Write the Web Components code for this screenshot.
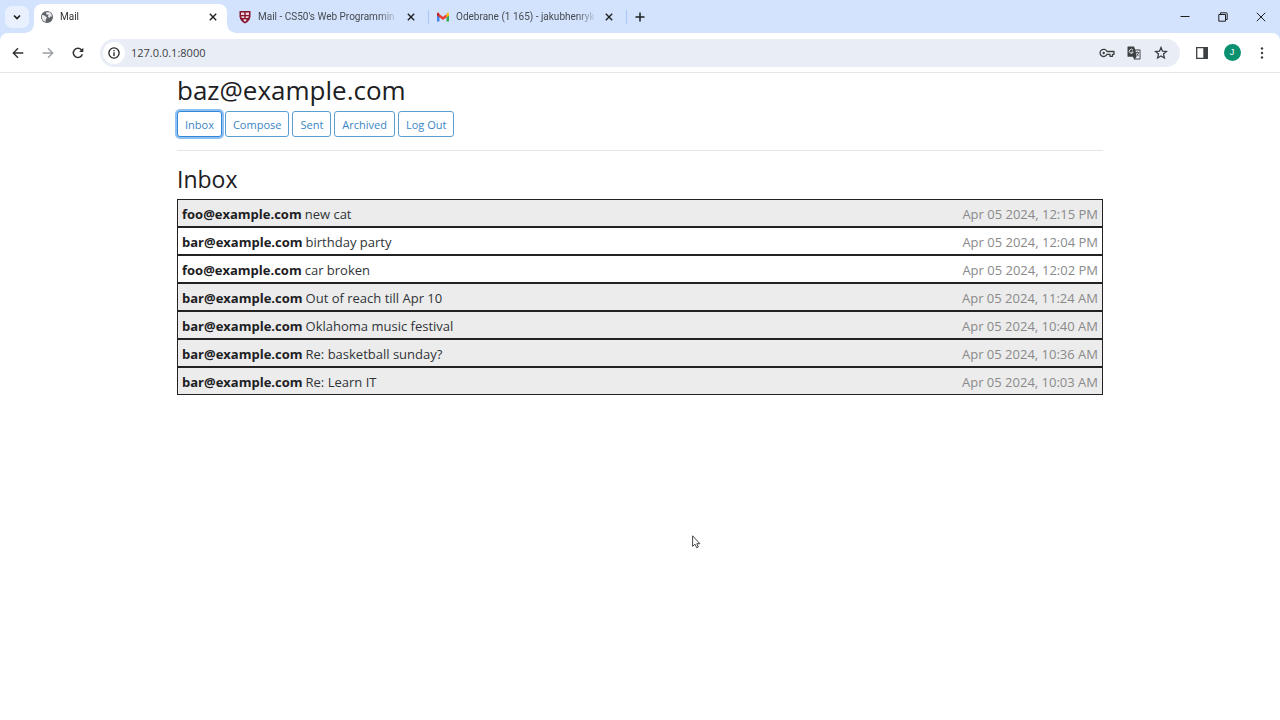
<!DOCTYPE html>
<html lang="en">
<head>
<meta charset="utf-8">
<title>Mail</title>
<style>
  html, body { margin: 0; height: 100%; }
  body { background: #fff; font-family: "Open Sans", "Noto Sans", sans-serif; color: #212529; overflow: hidden; }
</style>
</head>
<body>
<browser-window>
  <browser-tab slot="tab" label="Mail" active>
    <svg slot="icon" viewBox="0 0 14 14" width="14" height="14"><circle cx="7" cy="7" r="6" fill="#5f6368"/><path d="M2 5.2Q4 4.800 5.300 6.200L7 7.300 5.800 9.400 5.500 12Q2.200 11 1.900 7.500ZM6 2.200L9.800 2.200Q12 4 12 6.500L10.300 6.500 9.400 8.200 8 6.500 8.600 4.800 6.300 4.400Z" fill="#e8eaed"/></svg>
  </browser-tab>
  <browser-tab slot="tab" label="Mail - CS50's Web Programmin">
    <svg slot="icon" viewBox="0 0 14 14" width="14" height="14"><path d="M1.500 1H12.500V6.500Q12 11 7 13.500 2 11 1.500 6.500Z" fill="#85162f"/><path d="M3 2.600H6.300V5H3ZM7.700 2.600H11V5H7.700ZM3.200 6.300H6.300V8H3.800ZM7.700 6.300H10.800L10.200 8H7.700ZM5.600 9.200H8.400V10.800L7 11.700 5.600 10.800Z" fill="#ecd5db"/></svg>
  </browser-tab>
  <browser-tab slot="tab" label="Odebrane (1 165) - jakubhenryk">
    <svg slot="icon" viewBox="0 0 14 14" width="14" height="14"><path d="M1 3.500V11.500H3.500V5.500Z" fill="#4285f4"/><path d="M13 3.500V11.500H10.500V5.500Z" fill="#34a853"/><path d="M10.500 4.500V7.500L13 5.600V3.500Q12.500 2 11.200 2.800Z" fill="#fbbc04"/><path d="M3.500 7.500V4.200L7 6.800 10.500 4.200V7.500L7 10.100Z" fill="#ea4335"/><path d="M1 5.600L3.500 7.500V4.200L2.800 2.800Q1.300 2 1 3.800Z" fill="#c5221f"/></svg>
  </browser-tab>
  <browser-toolbar slot="toolbar" address="127.0.0.1:8000"></browser-toolbar>
  <mail-app user="baz@example.com">
    <mail-row read sender="foo@example.com" subject="new cat" time="Apr 05 2024, 12:15 PM"></mail-row>
    <mail-row sender="bar@example.com" subject="birthday party" time="Apr 05 2024, 12:04 PM"></mail-row>
    <mail-row sender="foo@example.com" subject="car broken" time="Apr 05 2024, 12:02 PM"></mail-row>
    <mail-row read sender="bar@example.com" subject="Out of reach till Apr 10" time="Apr 05 2024, 11:24 AM"></mail-row>
    <mail-row read sender="bar@example.com" subject="Oklahoma music festival" time="Apr 05 2024, 10:40 AM"></mail-row>
    <mail-row read sender="bar@example.com" subject="Re: basketball sunday?" time="Apr 05 2024, 10:36 AM"></mail-row>
    <mail-row read sender="bar@example.com" subject="Re: Learn IT" time="Apr 05 2024, 10:03 AM"></mail-row>
  </mail-app>
</browser-window>
<mouse-pointer></mouse-pointer>

<script>
const define = (name, html, setup) => {
  const template = document.createElement('template');
  template.innerHTML = html;
  customElements.define(name, class extends HTMLElement {
    constructor() {
      super();
      this.attachShadow({ mode: 'open' }).append(template.content.cloneNode(true));
    }
    connectedCallback() { if (setup) setup(this, this.shadowRoot); }
  });
};

const buttonReset = `*{box-sizing:border-box} button{display:grid;place-items:center;flex:none;margin:0;padding:0;border:0;background:none;font:inherit;color:inherit} svg{display:block;fill:none;stroke:currentColor}`;

define('browser-window', `
<style>
  ${buttonReset}
  :host{display:flex;flex-direction:column;min-height:100%;background:#fff}
  header{background:#d3e3fd;color:#1f1f1f}
  .strip{display:flex;align-items:center;height:33px}
  .search{width:24px;height:22px;margin:0 5px;border-radius:7px;background:#e9f1fe}
  .tabs{display:flex;align-self:stretch;min-width:0}
  .new{width:26px;height:24px}
  .controls{display:flex;margin-left:auto}
  .controls button{width:38px;height:33px}
</style>
<header>
  <div class="strip">
    <button class="search" aria-label="Search tabs"><svg width="8" height="8" viewBox="0 0 8 8"><path d="M1 2.500L4 5.500 7 2.500" stroke-width="1.700"/></svg></button>
    <div class="tabs" role="tablist"><slot name="tab"></slot></div>
    <button class="new" aria-label="New tab"><svg width="10" height="10" viewBox="0 0 10 10"><path d="M5 .5V9.500M.5 5H9.500" stroke-width="1.500"/></svg></button>
    <div class="controls">
      <button aria-label="Minimize"><svg width="10" height="10" viewBox="0 0 10 10"><path d="M.5 4.500H9.500"/></svg></button>
      <button aria-label="Restore"><svg width="10" height="10" viewBox="0 0 10 10"><path d="M.8 2.500H7.500V9.200H.8ZM2.500 2.500V.8H8.200Q9.200 .8 9.200 1.800V7.500H7.500"/></svg></button>
      <button aria-label="Close"><svg width="10" height="10" viewBox="0 0 10 10"><path d="M.8 .8L9.200 9.200M9.200 .8L.8 9.200"/></svg></button>
    </div>
  </div>
  <slot name="toolbar"></slot>
</header>
<slot></slot>`);

define('browser-tab', `
<style>
  ${buttonReset}
  :host{display:flex;align-items:center;width:198px;padding:0 12px 0 7px;box-sizing:border-box;position:relative;color:#474a4f;font-family:Roboto,sans-serif;font-size:10px;line-height:16px}
  :host(:not([active]))::after{content:"";position:absolute;right:0;top:10px;width:1px;height:14px;background:#a8c7fa}
  :host([active]){width:193px;height:29px;margin:4px 4px 0 0;padding:0 8px 3px 6px;border-radius:8px 8px 0 0;background:#fff;color:#303134}
  :host([active])::before,:host([active])::after{content:"";position:absolute;bottom:0;width:8px;height:8px}
  :host([active])::before{left:-8px;background:radial-gradient(circle at 0 0,transparent 7px,#fff 8px)}
  :host([active])::after{right:-8px;background:radial-gradient(circle at 100% 0,transparent 7px,#fff 8px)}
  .title{flex:1;min-width:0;margin:0 6px;overflow:hidden;white-space:nowrap;-webkit-mask-image:linear-gradient(to right,#000 calc(100% - 20px),transparent);mask-image:linear-gradient(to right,#000 calc(100% - 20px),transparent)}
  button{width:12px;height:12px;color:#202124}
</style>
<slot name="icon"></slot>
<span class="title" role="tab"></span>
<button aria-label="Close tab"><svg width="8" height="8" viewBox="0 0 8 8"><path d="M.8 .8L7.200 7.200M7.200 .8L.8 7.200" stroke-width="1.400"/></svg></button>`,
(host, root) => { root.querySelector('.title').textContent = host.getAttribute('label'); });

define('browser-toolbar', `
<style>
  ${buttonReset}
  :host{display:block}
  .bar{display:flex;align-items:center;height:40px;padding:0 3px;border-bottom:1px solid #e3e5e9;border-radius:8px 8px 0 0;background:#fff;color:#3c4043}
  .bar>button{width:30px;height:28px}
  .back{color:#303134}
  .forward{color:#9a9da1}
  .field{flex:1;display:flex;align-items:center;height:28px;margin:0 7px;padding:0 6px 0 3px;border-radius:14px;background:#e9eef6}
  .info{width:22px;height:22px;border-radius:50%;background:#fff;color:#202124}
  input{flex:1;min-width:0;height:20px;margin:0;padding:0 6px;border:0;outline:0;background:none;font:11px/20px "Open Sans","Noto Sans",sans-serif;color:#3c4043}
  .field .tool{width:27px;height:24px}
  .avatar span{display:grid;place-items:center;width:17px;height:17px;border-radius:50%;background:#0b9170;color:#fff;font:9px/17px "Liberation Sans",sans-serif}
</style>
<nav class="bar">
  <button class="back" aria-label="Back"><svg width="12" height="12" viewBox="0 0 12 12"><path d="M11.300 6H1.500M6 1.300L1.300 6 6 10.700" stroke-width="1.400"/></svg></button>
  <button class="forward" aria-label="Forward"><svg width="12" height="12" viewBox="0 0 12 12"><path d="M.7 6H10.500M6 1.300L10.700 6 6 10.700" stroke-width="1.300"/></svg></button>
  <button class="back" aria-label="Reload"><svg width="12" height="12" viewBox="0 0 12 12"><path d="M10.300 7.300A4.600 4.600 0 1 1 9.500 3L10.700 4.300" stroke-width="1.500"/><path d="M11.300 .8V5H7.100Z" fill="currentColor" stroke="none"/></svg></button>
  <div class="field">
    <button class="info" aria-label="Site information"><svg width="12" height="12" viewBox="0 0 12 12"><circle cx="6" cy="6" r="5.100" stroke-width="1.300"/><path d="M6 5.300V9M6 3V4.300" stroke-width="1.300"/></svg></button>
    <input aria-label="Address">
    <button class="tool" aria-label="Passwords"><svg width="16" height="10" viewBox="0 0 16 10"><path d="M8 3.500H15V6.300H13.500V8.300H11V6.300H8A3.600 3.600 0 1 1 8 3.500Z" stroke-width="1.300" stroke-linejoin="round"/><circle cx="4.700" cy="5" r="1.200" fill="currentColor" stroke="none"/></svg></button>
    <button class="tool" aria-label="Translate"><svg width="14" height="14" viewBox="0 0 14 14"><path d="M1 .5H7L8.200 3.500H13Q13.500 3.500 13.500 4V12.800Q13.500 13.500 13 13.500H7L6 10.800H1Q.5 10.800 .5 10.300V1Q.5 .5 1 .5Z" fill="currentColor" stroke="none"/><path d="M8.600 4.500H12.600V12.600H8.200L9.500 10.800Z" fill="#e9eef6" stroke="none"/><path d="M6 4.200A2 2 0 1 0 6.200 6H4.400" stroke="#e9eef6"/><path d="M8.700 6.500H12.200M10.500 5.500V6.500M11.600 6.700Q11 9 9.300 10M9.500 7.500L11.800 10.300" stroke-width=".8"/></svg></button>
    <button class="tool" aria-label="Bookmark"><svg width="14" height="14" viewBox="0 0 14 14"><path d="M7 1.500L8.500 5.200 12.500 5.500 9.500 8.100 10.400 12 7 9.900 3.600 12 4.500 8.100 1.500 5.500 5.500 5.200Z" stroke-width="1.300"/></svg></button>
  </div>
  <button aria-label="Side panel"><svg width="12" height="12" viewBox="0 0 12 12"><path d="M.7 .7H11.300V11.300H.7Z" stroke-width="1.300"/><path d="M7.300 .5H11.500V11.500H7.300Z" fill="currentColor" stroke="none"/></svg></button>
  <button class="avatar" aria-label="Profile"><span>J</span></button>
  <button aria-label="Menu"><svg width="4" height="14" viewBox="0 0 4 14"><g fill="currentColor" stroke="none"><circle cx="2" cy="2.500" r="1.200"/><circle cx="2" cy="7" r="1.200"/><circle cx="2" cy="11.500" r="1.200"/></g></svg></button>
</nav>`,
(host, root) => { root.querySelector('input').value = host.getAttribute('address'); });

define('mail-button', `
<style>
  :host{display:block}
  button{display:block;box-sizing:border-box;height:26px;margin:0;padding:1px 7px 0;border:1px solid #5b9fd0;border-radius:3px;background:#fff;color:#3a85c6;font:11px/24px "Open Sans","Noto Sans",sans-serif}
  :host([focused]) button{border-color:#3187d8;box-shadow:0 0 0 2px #8fc1f3}
</style>
<button><slot></slot></button>`);

define('mail-app', `
<style>
  *{box-sizing:border-box}
  :host{display:block;width:calc(100% - 24px);max-width:926px;margin:0 auto}
  h1,h2{margin:0;padding-top:1px;font-weight:500;color:#1c2023}
  h1{font-size:26px;line-height:32px}
  h2{font-size:23px;line-height:28px}
  nav{display:flex;gap:3px;margin:5px 0 13px}
  hr{height:1px;margin:0 0 13px;border:0;background:#e5e5e5}
  .list{margin-top:6px}
</style>
<main>
  <h1></h1>
  <nav>
    <mail-button focused>Inbox</mail-button>
    <mail-button>Compose</mail-button>
    <mail-button>Sent</mail-button>
    <mail-button>Archived</mail-button>
    <mail-button>Log Out</mail-button>
  </nav>
  <hr>
  <h2>Inbox</h2>
  <div class="list" role="list"><slot></slot></div>
</main>`,
(host, root) => { root.querySelector('h1').textContent = host.getAttribute('user'); });

define('mail-row', `
<style>
  :host{display:flex;gap:3px;height:28px;box-sizing:border-box;padding:0 4px;border:1px solid #222;background:#fff;font-size:13px;line-height:28px;color:#303438}
  :host([read]){background:#ececec}
  b{font-weight:700;color:#1c2023}
  time{margin-left:auto;color:#8a8a8a}
</style>
<b></b><span></span><time></time>`,
(host, root) => {
  host.setAttribute('role', 'listitem');
  root.querySelector('b').textContent = host.getAttribute('sender');
  root.querySelector('span').textContent = host.getAttribute('subject');
  root.querySelector('time').textContent = host.getAttribute('time');
});

define('mouse-pointer', `
<style>
  :host{position:absolute;left:54.100%;top:74.300%;pointer-events:none}
  svg{display:block}
</style>
<svg width="9" height="14" viewBox="0 0 9 14"><path d="M.6 .8V11.300L3 9.200 4.700 12.700 6.300 12 4.800 8.700H7.900Z" fill="#fff" stroke="#333" stroke-width=".9"/></svg>`);
</script>
</body>
</html>
